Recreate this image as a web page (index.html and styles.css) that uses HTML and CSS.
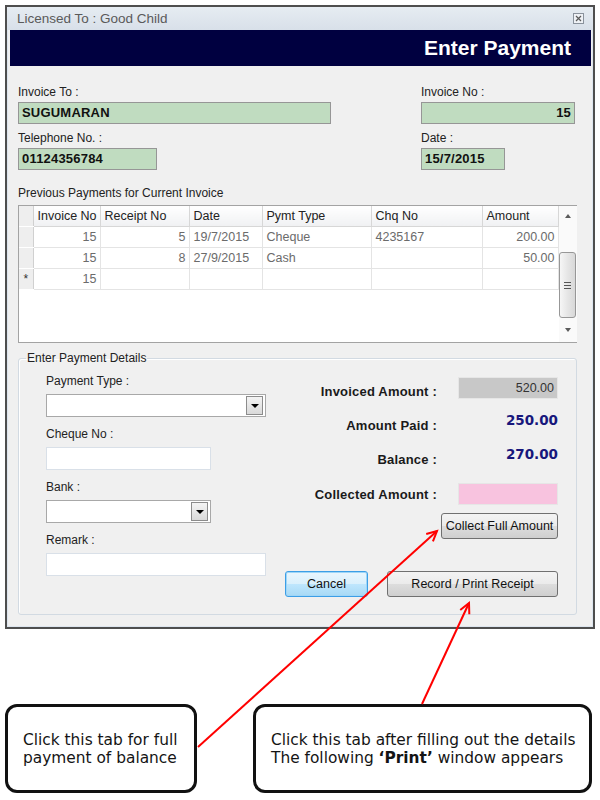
FILE: index.html
```html
<!DOCTYPE html>
<html>
<head>
<meta charset="utf-8">
<title>Enter Payment</title>
<link rel="stylesheet" href="styles.css">
</head>
<body>
<div class="stage">
  <div class="window">
    <div class="titlebar">
      <span class="title">Licensed To : Good Child</span>
      <svg class="close" width="11" height="11" viewBox="0 0 11 11"><rect x="0.5" y="0.5" width="10" height="10" fill="#eef1f5" stroke="#8a929c"/><path d="M3 3L8 8M8 3L3 8" stroke="#5a5a5a" stroke-width="1.2"/></svg>
    </div>
    <div class="banner">Enter Payment</div>
    <div class="client">
      <div class="top-form">
        <div class="col">
          <div class="lbl">Invoice To :</div>
          <div class="field w-name">SUGUMARAN</div>
          <div class="lbl">Telephone No. :</div>
          <div class="field w-tel">01124356784</div>
        </div>
        <div class="col">
          <div class="lbl">Invoice No :</div>
          <div class="field w-inv num">15</div>
          <div class="lbl">Date :</div>
          <div class="field w-date">15/7/2015</div>
        </div>
      </div>
      <div class="lbl prev">Previous Payments for Current Invoice</div>
      <div class="grid">
        <table class="pay">
          <colgroup><col class="c0"><col class="c1"><col class="c2"><col class="c3"><col class="c4"><col class="c5"><col class="c6"></colgroup>
          <thead>
            <tr><th class="rh"></th><th>Invoice No</th><th>Receipt No</th><th>Date</th><th>Pymt Type</th><th>Chq No</th><th>Amount</th></tr>
          </thead>
          <tbody>
            <tr><td class="rh"></td><td class="num">15</td><td class="num">5</td><td>19/7/2015</td><td>Cheque</td><td>4235167</td><td class="num">200.00</td></tr>
            <tr><td class="rh"></td><td class="num">15</td><td class="num">8</td><td>27/9/2015</td><td>Cash</td><td></td><td class="num">50.00</td></tr>
            <tr><td class="rh star">*</td><td class="num">15</td><td></td><td></td><td></td><td></td><td></td></tr>
          </tbody>
        </table>
        <div class="vscroll">
          <div class="sarrow"><span class="tri-up"></span></div>
          <div class="thumb"><span class="grip"></span></div>
          <div class="sarrow down"><span class="tri-down"></span></div>
        </div>
      </div>
      <fieldset class="details">
        <legend>Enter Payment Details</legend>
        <div class="details-body">
          <div class="inputs">
            <div class="flbl">Payment Type :</div>
            <div class="ctrl combo w-220"><span class="drop"><span class="tri-down blk"></span></span></div>
            <div class="flbl">Cheque No :</div>
            <div class="ctrl w-165"></div>
            <div class="flbl">Bank :</div>
            <div class="ctrl combo w-165"><span class="drop"><span class="tri-down blk"></span></span></div>
            <div class="flbl">Remark :</div>
            <div class="ctrl w-220"></div>
          </div>
          <div class="amounts">
            <div class="arow r1">
              <div class="albl">Invoiced Amount :</div>
              <div class="box gray">520.00</div>
            </div>
            <div class="arow r2">
              <div class="albl">Amount Paid :</div>
              <div class="aval">250.00</div>
            </div>
            <div class="arow r3">
              <div class="albl">Balance :</div>
              <div class="aval">270.00</div>
            </div>
            <div class="arow r4">
              <div class="albl">Collected Amount :</div>
              <div class="box pink"></div>
            </div>
            <div class="btnrow1"><button class="btn collect">Collect Full Amount</button></div>
            <div class="btnrow2">
              <button class="btn cancel">Cancel</button>
              <button class="btn record">Record / Print Receipt</button>
            </div>
          </div>
        </div>
      </fieldset>
    </div>
  </div>
  <div class="callouts">
    <div class="callout left"><span>Click this tab for full<br>payment of balance</span></div>
    <div class="callout right"><span>Click this tab after filling out the details<br>The following <b>‘Print’</b> window appears</span></div>
  </div>
  <svg class="arrows" width="600" height="800" viewBox="0 0 600 800">
    <defs>
      <marker id="head" markerUnits="userSpaceOnUse" markerWidth="14" markerHeight="14" refX="11" refY="6" orient="auto">
        <path d="M1 1 L11 6 L1 11" fill="none" stroke="#ff0000" stroke-width="2"/>
      </marker>
    </defs>
    <line x1="198" y1="747" x2="437" y2="531" stroke="#ff0000" stroke-width="2" marker-end="url(#head)"/>
    <line x1="422" y1="704" x2="469" y2="603" stroke="#ff0000" stroke-width="2" marker-end="url(#head)"/>
  </svg>
</div>
</body>
</html>
```

FILE: styles.css
```css
* { box-sizing: border-box; }

body {
  margin: 0;
  background: #ffffff;
  font-family: "Liberation Sans", Arial, sans-serif;
  font-size: 12px;
  color: #1a1a1a;
}

.stage {
  position: relative;
  width: 600px;
  height: 800px;
  overflow: hidden;
}

/* ---------- window ---------- */
.window {
  margin: 5px 0 0 5px;
  width: 590px;
  height: 624px;
  border: 2px solid #4e4e4e;
  background: #f0f0f0;
  box-shadow: inset 0 0 0 1px #dde5ee;
}

.titlebar {
  height: 23px;
  display: flex;
  align-items: center;
  justify-content: space-between;
  padding: 0 9px 0 10px;
  background: linear-gradient(#e6ecf2, #d8e0e9);
}

.title {
  font-size: 13.5px;
  color: #5a5a5a;
}

.close { display: block; }

.banner {
  height: 36px;
  margin: 0 2px 0 3px;
  background: #000040;
  color: #ffffff;
  font-weight: bold;
  font-size: 21px;
  line-height: 36px;
  text-align: right;
  padding-right: 20px;
}

.client {
  padding-left: 11px;
}

/* ---------- top form ---------- */
.top-form {
  display: grid;
  grid-template-columns: 403px 1fr;
  margin-top: 19px;
}

.lbl {
  height: 14px;
  line-height: 14px;
  color: #222;
}

.field {
  height: 22px;
  margin-top: 3px;
  border: 1px solid #969696;
  background: #c0dcc0;
  font-weight: bold;
  font-size: 13px;
  line-height: 20px;
  padding: 0 3px;
  color: #111;
  letter-spacing: 0.2px;
}

.field + .lbl { margin-top: 7px; }

.field.num { text-align: right; }

.w-name { width: 313px; }
.w-tel { width: 139px; }
.w-inv { width: 154px; }
.w-date { width: 84px; }

.prev { margin-top: 16px; }

/* ---------- grid ---------- */
.grid {
  margin-top: 5px;
  width: 559px;
  height: 138px;
  border: 1px solid #a3a3a3;
  background: #ffffff;
  display: flex;
  align-items: flex-start;
}

.pay {
  border-collapse: collapse;
  table-layout: fixed;
  width: 539px;
  font-size: 12.5px;
}

.c0 { width: 14px; }
.c1 { width: 67px; }
.c2 { width: 89px; }
.c3 { width: 73px; }
.c4 { width: 109px; }
.c5 { width: 111px; }
.c6 { width: 76px; }

.pay th {
  height: 20px;
  padding: 0 4px;
  text-align: left;
  font-weight: normal;
  color: #222;
  white-space: nowrap;
  overflow: hidden;
  background: linear-gradient(#ffffff, #f0f1f3);
  border-right: 1px solid #d7d7d7;
  border-bottom: 1px solid #d7d7d7;
}

.pay td {
  height: 21px;
  padding: 0 4px;
  color: #6b6b6b;
  white-space: nowrap;
  border-right: 1px solid #e4e4e4;
  border-bottom: 1px solid #e4e4e4;
}

.pay td.num { text-align: right; padding-right: 3px; }

.pay .rh {
  padding: 0;
  background: #eeeeee;
  border-right: 1px solid #d0d0d0;
  border-bottom: 1px solid #ffffff;
}

.pay td.star {
  color: #333;
  text-align: center;
  font-size: 12px;
}

.vscroll {
  width: 18px;
  height: 136px;
  background: #fafafa;
  display: flex;
  flex-direction: column;
  align-items: center;
}

.sarrow {
  width: 18px;
  height: 20px;
  display: flex;
  align-items: center;
  justify-content: center;
}

.sarrow.down { margin-top: 2px; }

.tri-up {
  width: 0;
  height: 0;
  border-left: 3.5px solid transparent;
  border-right: 3.5px solid transparent;
  border-bottom: 4px solid #5c5c5c;
}

.tri-down {
  width: 0;
  height: 0;
  border-left: 3.5px solid transparent;
  border-right: 3.5px solid transparent;
  border-top: 4px solid #5c5c5c;
}

.thumb {
  margin-top: 26px;
  width: 17px;
  height: 66px;
  border: 1px solid #979797;
  border-radius: 3px;
  background: linear-gradient(90deg, #f6f6f6, #e6e6e6 50%, #d8d8d8);
  display: flex;
  align-items: center;
  justify-content: center;
}

.grip {
  width: 7px;
  height: 7px;
  background: repeating-linear-gradient(#555 0 1px, transparent 1px 3px);
}

/* ---------- payment details group ---------- */
.details {
  margin: 8px 0 0 0;
  padding: 0;
  min-width: 0;
  width: 559px;
  height: 264px;
  border: 1px solid #d2dae2;
  border-radius: 3px;
  box-shadow: inset 1px 1px 0 #ffffff;
}

.details legend {
  margin-left: 7px;
  padding: 0 1px;
  line-height: 14px;
  font-size: 12px;
  color: #222;
}

.details-body {
  display: flex;
  padding: 0 18px 0 27px;
}

.inputs { width: 220px; }

.flbl {
  margin-top: 10px;
  height: 14px;
  line-height: 14px;
  color: #222;
}

.flbl:first-child { margin-top: 9px; }

.ctrl {
  margin-top: 6px;
  height: 23px;
  background: #ffffff;
  border: 1px solid #d9e0e8;
}

.combo {
  border-color: #a8a8a8;
  display: flex;
  justify-content: flex-end;
  align-items: center;
  padding-right: 2px;
}

.drop {
  width: 17px;
  height: 19px;
  border: 1px solid #8c8c8c;
  background: linear-gradient(#f4f4f4, #d9d9d9);
  display: flex;
  align-items: center;
  justify-content: center;
}

.tri-down.blk { border-top-color: #000; border-left-width: 4px; border-right-width: 4px; }

.w-220 { width: 220px; }
.w-165 { width: 165px; }

.amounts {
  margin-left: 19px;
  width: 273px;
}

.arow {
  display: grid;
  grid-template-columns: 1fr 100px;
  column-gap: 21px;
  align-items: start;
}

.albl {
  text-align: right;
  font-weight: bold;
  font-size: 13px;
  color: #1a1a1a;
  letter-spacing: 0.2px;
}

.r1 { margin-top: 12px; height: 22px; }
.r1 .albl { line-height: 16px; padding-top: 7px; }

.r2 { margin-top: 13px; height: 16px; }
.r3 { margin-top: 18px; height: 16px; }
.r2 .albl, .r3 .albl { line-height: 16px; padding-top: 6px; }

.aval {
  text-align: right;
  line-height: 16px;
  font-family: "DejaVu Sans", Verdana, sans-serif;
  font-weight: bold;
  font-size: 13.5px;
  color: #17177c;
}

.r4 { margin-top: 21px; height: 22px; }
.r4 .albl { line-height: 16px; padding-top: 4px; }

.box {
  height: 22px;
  border: 1px solid #e6e6e6;
  text-align: right;
  padding-right: 3px;
  line-height: 20px;
  font-size: 12.5px;
}

.gray { background: #c8c8c8; color: #333; }
.pink { background: #f8c3df; }

.btnrow1 {
  display: flex;
  justify-content: flex-end;
  margin-top: 8px;
}

.btnrow2 {
  display: flex;
  justify-content: space-between;
  margin-top: 32px;
}

.btn {
  height: 26px;
  padding: 0;
  border: 1px solid #707070;
  border-radius: 3px;
  background: linear-gradient(#f3f3f3 0%, #ebebeb 50%, #dddddd 51%, #cfcfcf 100%);
  font-family: "Liberation Sans", Arial, sans-serif;
  font-size: 12.5px;
  color: #111;
}

.collect { width: 117px; }
.record { width: 171px; }

.cancel {
  width: 83px;
  border-color: #3c9ee6;
  background: linear-gradient(#eaf6fd 0%, #d9f0fc 50%, #bee6fd 51%, #a7d9f5 100%);
  box-shadow: inset 0 0 0 1px #9fd6f7;
}

/* ---------- callouts ---------- */
.callouts {
  display: flex;
  gap: 56px;
  margin: 75px 0 0 5px;
}

.callout {
  height: 89px;
  border: 3px solid #111;
  border-radius: 12px;
  background: #fff;
  display: flex;
  align-items: center;
  padding: 0 6px 0 15px;
  font-family: "DejaVu Sans", Verdana, sans-serif;
  font-size: 15.4px;
  line-height: 18px;
  color: #141414;
  white-space: nowrap;
}

.callout.left { width: 192px; }
.callout.right { width: 339px; }

.arrows {
  position: absolute;
  left: 0;
  top: 0;
  pointer-events: none;
}
```
